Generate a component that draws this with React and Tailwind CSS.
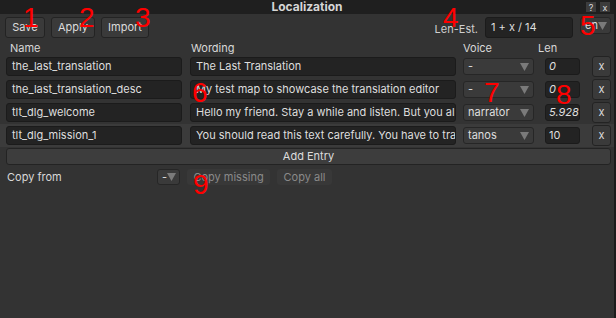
const rows = [
  { name: 'the_last_translation', wording: 'The Last Translation', voice: '-', len: '0', lenSet: false },
  { name: 'the_last_translation_desc', wording: 'My test map to showcase the translation editor', voice: '-', len: '0', lenSet: false },
  { name: 'tlt_dlg_welcome', wording: 'Hello my friend. Stay a while and listen. But you all must know', voice: 'narrator', len: '5.928', lenSet: false },
  { name: 'tlt_dlg_mission_1', wording: 'You should read this text carefully. You have to translate it', voice: 'tanos', len: '10', lenSet: true, hover: true },
]

const Caret = () => (
  <svg width="9" height="8" viewBox="0 0 9 8" className="shrink-0">
    <path d="M0 0 H9 L4.5 8 Z" fill="#7a7a7a" />
  </svg>
)

const Btn = ({ children, className = '', dim = false }) => (
  <div
    className={`flex shrink-0 items-center justify-center rounded-[3px] border border-[#232323] bg-[#3a3a3a] text-[11px] ${dim ? 'text-[#8a8a8a]' : 'text-[#dcdcdc]'} ${className}`}
  >
    {children}
  </div>
)

const Field = ({ children, className = '' }) => (
  <div
    className={`flex shrink-0 items-center overflow-hidden whitespace-nowrap rounded-[3px] border border-[#1b1b1b] bg-[#232323] text-[11px] text-[#dedede] ${className}`}
  >
    {children}
  </div>
)

const Select = ({ value, className = '' }) => (
  <div
    className={`flex shrink-0 items-center justify-between overflow-hidden rounded-[3px] border border-[#262626] bg-[#3a3a3a] pl-[4px] pr-[4px] text-[11px] text-[#dedede] ${className}`}
  >
    <span className="whitespace-nowrap">{value}</span>
    <Caret />
  </div>
)

const Mark = ({ n, className }) => (
  <span
    className={`pointer-events-none absolute text-[28px] leading-none text-[#ff0000] ${className}`}
    style={{ fontFamily: '"Liberation Sans", Arial, sans-serif' }}
  >
    {n}
  </span>
)

export default function App() {
  return (
    <div
      className="relative flex h-[318px] w-[616px] flex-col overflow-hidden border-r-2 border-[#1c1c1c] bg-[#333333] text-[#dedede]"
      style={{ fontFamily: 'Inter, "Noto Sans", sans-serif' }}
    >
      {/* title bar */}
      <div className="relative flex h-[14px] shrink-0 items-center justify-center bg-[#1f1f1f]">
        <span className="text-[12px] font-bold leading-none text-[#d6d6d6]">Localization</span>
        <div className="absolute right-[4px] top-[2px] flex gap-[4px]">
          <div className="flex h-[10px] w-[10px] items-center justify-center bg-[#3c3c3c] text-[9px] leading-none text-[#ddd]">?</div>
          <div className="flex h-[10px] w-[10px] items-center justify-center bg-[#3c3c3c] text-[9px] leading-none text-[#ddd]">x</div>
        </div>
      </div>

      {/* toolbar */}
      <div className="mt-[3px] flex h-[21px] shrink-0 items-center pl-[5px] pr-[3px]">
        <Btn className="h-[21px] w-[40px]">Save</Btn>
        <Btn className="ml-[6px] h-[21px] w-[44px]">Apply</Btn>
        <Btn className="ml-[6px] h-[21px] w-[48px]">Import</Btn>
        <div className="flex-1" />
        <span className="mt-[4px] text-[11px] text-[#cfcfcf]">Len-Est.</span>
        <Field className="ml-[7px] h-[21px] w-[88px] px-[5px]">1 + x / 14</Field>
        <Select value="en" className="ml-[7px] h-[17px] w-[31px] self-start" />
      </div>

      {/* header */}
      <div className="mt-[3px] flex h-[14px] shrink-0 items-center px-[10px] text-[11px] text-[#d8d8d8]">
        <span className="w-[181px] shrink-0">Name</span>
        <span className="w-[272px] shrink-0">Wording</span>
        <span className="w-[75px] shrink-0">Voice</span>
        <span>Len</span>
      </div>

      {/* entries */}
      <div className="flex flex-col">
        {rows.map((r) => (
          <div
            key={r.name}
            className={`flex h-[23px] items-center pl-[6px] ${r.hover ? 'bg-[#3b3b3b]' : ''}`}
          >
            <Field className="h-[19px] w-[176px] px-[5px]">{r.name}</Field>
            <Field className="ml-[8px] h-[19px] w-[266px] px-[5px]">{r.wording}</Field>
            <Select value={r.voice} className="ml-[7px] h-[17px] w-[71px]" />
            <Field
              className={`ml-[11px] h-[17px] w-[35px] px-[3px] ${r.lenSet ? '' : 'italic text-[#7c7c7c]'}`}
            >
              {r.len}
            </Field>
            <Btn className="ml-[12px] h-[21px] w-[19px]">x</Btn>
          </div>
        ))}
      </div>

      {/* add entry */}
      <div className="pl-[6px] pr-[3px] pt-[1px]">
        <Btn className="h-[17px] w-full bg-[#3d3d3d]">Add Entry</Btn>
      </div>

      {/* copy row */}
      <div className="mt-[4px] flex h-[16px] items-center px-[7px] text-[11px]">
        <span className="w-[150px] shrink-0 text-[#d8d8d8]">Copy from</span>
        <Select value="-" className="h-[16px] w-[23px] pr-[3px]" />
        <Btn dim className="ml-[7px] h-[16px] w-[83px] border-transparent bg-[#383838]">Copy missing</Btn>
        <Btn dim className="ml-[7px] h-[16px] w-[55px] border-transparent bg-[#383838]">Copy all</Btn>
      </div>

      <Mark n="1" className="left-[23px] top-[4px]" />
      <Mark n="2" className="left-[79px] top-[4px]" />
      <Mark n="3" className="left-[135px] top-[4px]" />
      <Mark n="4" className="left-[443px] top-[4px]" />
      <Mark n="5" className="left-[580px] top-[12px]" />
      <Mark n="6" className="left-[192px] top-[79px]" />
      <Mark n="7" className="left-[484px] top-[79px]" />
      <Mark n="8" className="left-[556px] top-[81px]" />
      <Mark n="9" className="left-[193px] top-[171px]" />
    </div>
  )
}
